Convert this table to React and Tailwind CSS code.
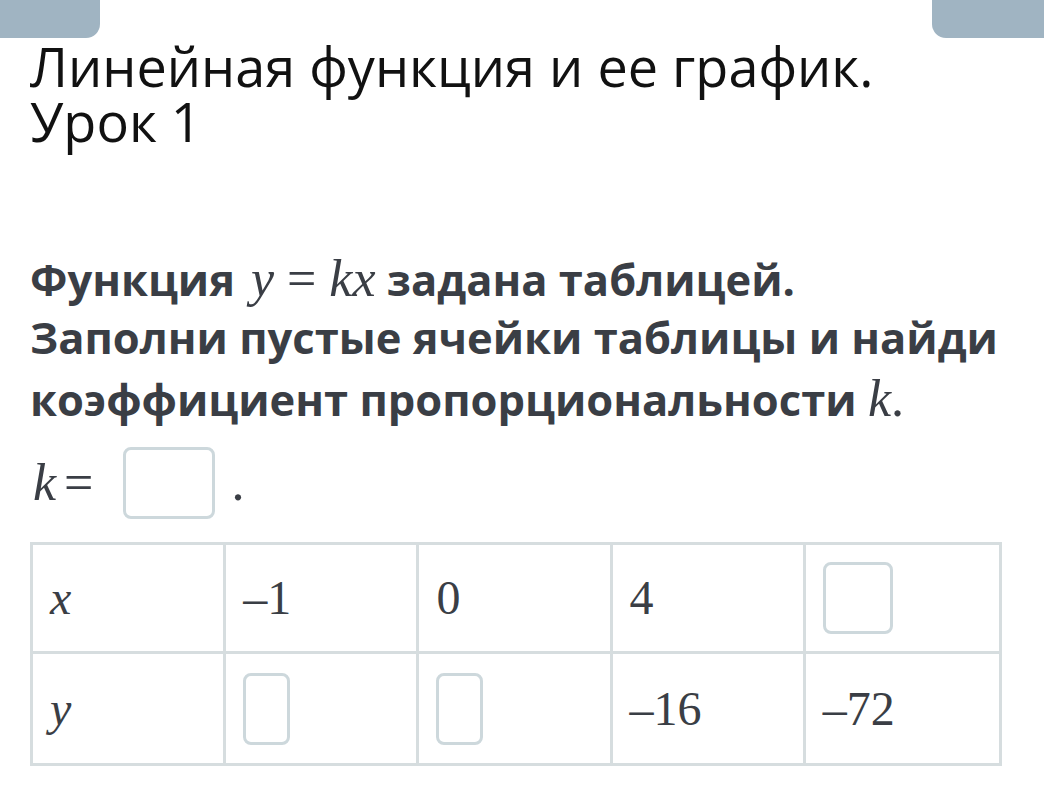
import React from "react";

const Box = ({ className }) => (
  <div className={`border-[3px] border-[#cdd8dc] rounded-[8px] bg-white ${className}`} />
);

const M = ({ children, className = "" }) => (
  <span
    className={`italic font-normal ${className}`}
    style={{ fontFamily: "'Liberation Serif', 'DejaVu Serif', serif" }}
  >
    {children}
  </span>
);

const N = ({ children, className = "" }) => (
  <span
    className={`font-normal ${className}`}
    style={{ fontFamily: "'Liberation Serif', 'DejaVu Serif', serif" }}
  >
    {children}
  </span>
);

const App = () => {
  return (
    <div className="w-[1044px] h-[796px] bg-white overflow-hidden font-['Open_Sans',sans-serif]">
      {/* top tabs */}
      <div className="flex justify-between h-[38px]">
        <div className="w-[100px] h-full bg-[#a0b4c2] rounded-br-[14px]" />
        <div className="w-[112px] h-full bg-[#a0b4c2] rounded-bl-[14px]" />
      </div>

      <div className="px-[30px]">
        <h1 className="text-[54px] leading-[55px] font-normal text-[#111] whitespace-nowrap mt-[1px]">
          Линейная функция и ее график.
          <br />
          Урок 1
        </h1>

        <p className="mt-[98px] text-[43.5px] leading-[58px] font-bold text-[#3a3e45] whitespace-nowrap">
          Функция
          <span className="text-[52px] ml-[16px]">
            <M>y</M>
            <N className="mx-[13px]">=</N>
            <M>kx</M>
          </span>{" "}
          задана таблицей.
          <br />
          Заполни пустые ячейки таблицы и найди
          <br />
          коэффициент пропорциональности{" "}
          <span className="text-[52px]">
            <M>k</M>
            <N>.</N>
          </span>
        </p>

        {/* k = [ ] . */}
        <div className="flex items-center mt-[18px] h-[72px] text-[52px] text-[#3a3e45]">
          <M className="ml-[3px]">k</M>
          <N className="ml-[8px]">=</N>
          <Box className="w-[92px] h-[72px] ml-[30px]" />
          <N className="ml-[16px]">.</N>
        </div>

        {/* table */}
        <div className="mt-[23px] w-[972px] border-[3px] border-[#d6dddf] grid grid-cols-5 text-[48px] text-[#3a3e45]">
          {[
            [<M>x</M>, <N>–1</N>, <N>0</N>, <N>4</N>, <Box className="w-[70px] h-[72px]" />],
            [<M>y</M>, <Box className="w-[47px] h-[72px]" />, <Box className="w-[47px] h-[72px]" />, <N>–16</N>, <N>–72</N>],
          ].map((row, r) =>
            row.map((cell, c) => (
              <div
                key={`${r}-${c}`}
                className={`h-[109px] flex items-center px-[17px] border-[#d6dddf] ${
                  c < 4 ? "border-r-[3px]" : ""
                } ${r === 0 ? "border-b-[3px]" : ""}`}
              >
                {cell}
              </div>
            ))
          )}
        </div>
      </div>
    </div>
  );
};

export default App;
